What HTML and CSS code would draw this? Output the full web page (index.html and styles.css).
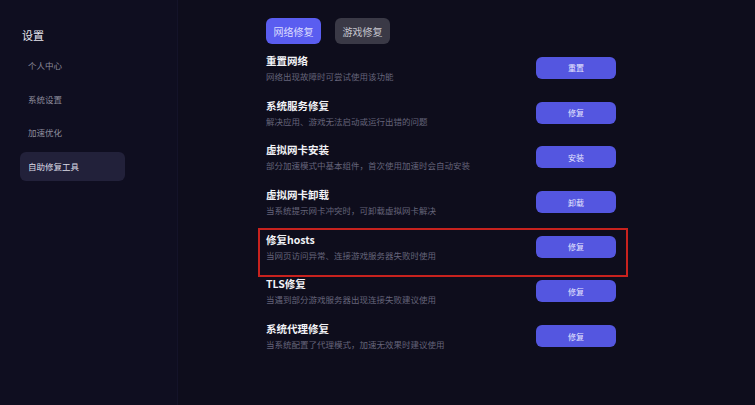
FILE: index.html
```html
<!DOCTYPE html>
<html lang="zh-CN">
<head>
  <meta charset="UTF-8" />
  <title>设置</title>
  <link rel="stylesheet" href="styles.css">
</head>
<body>
  <div class="app">
    <div class="sidebar">
      <h2>设置</h2>
      <div class="nav">
        <div class="nav-item">个人中心</div>
        <div class="nav-item">系统设置</div>
        <div class="nav-item">加速优化</div>
        <div class="nav-item active">自助修复工具</div>
      </div>
    </div>

    <div class="main">
      <div class="tabs">
        <button class="tab on">网络修复</button>
        <button class="tab">游戏修复</button>
      </div>

      <div class="list">
        <div class="row">
          <div class="info">
            <div class="name">重置网络</div>
            <div class="desc">网络出现故障时可尝试使用该功能</div>
          </div>
          <button class="btn">重置</button>
        </div>
        <div class="row">
          <div class="info">
            <div class="name">系统服务修复</div>
            <div class="desc">解决应用、游戏无法启动或运行出错的问题</div>
          </div>
          <button class="btn">修复</button>
        </div>
        <div class="row">
          <div class="info">
            <div class="name">虚拟网卡安装</div>
            <div class="desc">部分加速模式中基本组件，首次使用加速时会自动安装</div>
          </div>
          <button class="btn">安装</button>
        </div>
        <div class="row">
          <div class="info">
            <div class="name">虚拟网卡卸载</div>
            <div class="desc">当系统提示网卡冲突时，可卸载虚拟网卡解决</div>
          </div>
          <button class="btn">卸载</button>
        </div>
        <div class="row marked">
          <div class="info">
            <div class="name">修复hosts</div>
            <div class="desc">当网页访问异常、连接游戏服务器失败时使用</div>
          </div>
          <button class="btn">修复</button>
        </div>
        <div class="row">
          <div class="info">
            <div class="name">TLS修复</div>
            <div class="desc">当遇到部分游戏服务器出现连接失败建议使用</div>
          </div>
          <button class="btn">修复</button>
        </div>
        <div class="row">
          <div class="info">
            <div class="name">系统代理修复</div>
            <div class="desc">当系统配置了代理模式，加速无效果时建议使用</div>
          </div>
          <button class="btn">修复</button>
        </div>
      </div>
    </div>
  </div>
</body>
</html>
```

FILE: styles.css
```css
* { box-sizing: border-box; }
body { margin: 0; background: #0e0d1c; font-family: "Noto Sans CJK SC", "Noto Sans", sans-serif; color: #fff; }
.app { display: flex; width: 755px; height: 405px; overflow: hidden; }

.sidebar { width: 178px; background: #0f0e20; border-right: 1px solid #141329; padding: 26px 0 0 20px; }
.sidebar h2 { margin: 0; padding-left: 2px; font-size: 11px; line-height: 18px; font-weight: 400; color: #e8e8f0; }
.nav { margin-top: 7px; display: flex; flex-direction: column; gap: 4.5px; }
.nav-item { width: 105px; height: 29px; line-height: 29px; padding-left: 8px; font-size: 8.5px; color: #8d8c9c; border-radius: 6px; }
.nav-item.active { background: #22213a; color: #dcdce6; }

.main { flex: 1; padding: 18px 0 0 88px; }
.tabs { display: flex; gap: 14px; }
.tab { width: 55px; height: 26px; border: 0; border-radius: 6px; background: #3a3946; color: #c6c6cf; font-family: inherit; font-size: 10px; padding: 0; }
.tab.on { background: #5a5df0; color: #dcdcff; }

.list { margin-top: 1.6px; width: 350px; }
.row { position: relative; height: 44.7px; display: flex; align-items: center; justify-content: space-between; }
.name { font-size: 10.5px; line-height: 16px; font-weight: 700; color: #f2f2f6; }
.desc { font-size: 8.5px; line-height: 14px; color: #65647a; }
.btn { width: 80px; height: 22px; border: 0; border-radius: 6px; background: #5456e0; color: #e6e6ff; font-family: inherit; font-size: 8px; padding: 0; }

.marked::after { content: ""; position: absolute; left: -8px; right: -12px; top: 4px; height: 45px; border: 2px solid #c8221e; }
```
